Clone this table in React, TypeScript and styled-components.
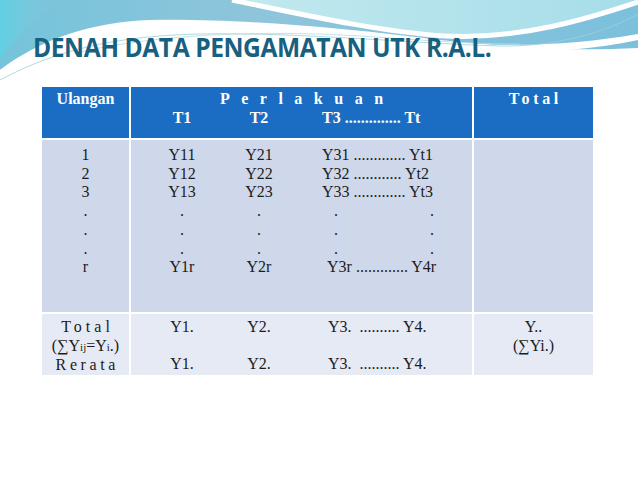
import { Fragment } from "react";
import styled, { createGlobalStyle } from "styled-components";

const GlobalStyle = createGlobalStyle`
  html, body {
    margin: 0;
    padding: 0;
    background: #ffffff;
  }
`;

const Slide = styled.div`
  position: relative;
  width: 638px;
  height: 478px;
  overflow: hidden;
  background: #ffffff;
  font-family: "Liberation Serif", "DejaVu Serif", serif;
`;

// the blue swoosh across the top of the slide
const Decoration = styled.svg`
  position: absolute;
  top: 0;
  left: 0;
  width: 638px;
  height: 90px;
`;

const Content = styled.div`
  position: relative;
  display: flex;
  flex-direction: column;
  padding: 29px 0 0 33px;
`;

const Title = styled.h1`
  margin: 0;
  font-family: "Open Sans", "Liberation Sans", sans-serif;
  font-weight: 700;
  font-size: 27.5px;
  line-height: 36px;
  letter-spacing: -0.5px;
  color: #17607f;
  white-space: nowrap;
  transform: scaleX(0.895);
  transform-origin: left center;
`;

const Table = styled.table`
  margin: 20px 0 0 7px;
  width: 553px;
  border-collapse: collapse;
  table-layout: fixed;
  font-size: 16px;
  color: #1c1c1c;
`;

const Cell = styled.td<{ $bg: string; $pad: number }>`
  background: ${(p) => p.$bg};
  border: 2px solid #ffffff;
  vertical-align: top;
  text-align: center;
  padding: ${(p) => p.$pad}px 0 0;
  line-height: 18.7px;
`;

const HeadCell = styled(Cell)`
  color: #ffffff;
  font-weight: 700;
`;

const Spaced = styled.div<{ $gap: number }>`
  letter-spacing: ${(p) => p.$gap}px;
  padding-left: ${(p) => p.$gap}px;
  white-space: nowrap;
`;

const SubGrid = styled.div`
  display: grid;
  grid-template-columns: 102px 52px 37px 118px 1fr;
`;

const Sub = styled.div<{ $col: number }>`
  grid-column: ${(p) => p.$col};
  text-align: center;
  white-space: nowrap;
`;

const Wide = styled.div<{ $shift?: number }>`
  grid-column: 4 / span 2;
  text-align: left;
  white-space: nowrap;
  padding-left: ${(p) => p.$shift ?? 0}px;
`;

const Range = styled.div`
  grid-column: 4;
  display: flex;
  justify-content: space-between;
  white-space: nowrap;
  padding: 0 6px 0 12px;
`;

const Small = styled.span`
  font-size: 11px;
`;

type BodyRow = { u: string; a: string; b: string; c?: string; shift?: number };

const bodyRows: BodyRow[] = [
  { u: "1", a: "Y11", b: "Y21", c: "Y31 ............. Yt1" },
  { u: "2", a: "Y12", b: "Y22", c: "Y32 ............ Yt2" },
  { u: "3", a: "Y13", b: "Y23", c: "Y33 ............. Yt3" },
  { u: ".", a: ".", b: "." },
  { u: ".", a: ".", b: "." },
  { u: ".", a: ".", b: "." },
  { u: "r", a: "Y1r", b: "Y2r", c: "Y3r ............. Y4r", shift: 5 },
];

const footLine = "Y3.\u00a0\u00a0.......... Y4.";

export default function App() {
  return (
    <>
      <GlobalStyle />
      <Slide>
        <Decoration viewBox="0 0 638 90">
          <defs>
            <linearGradient id="sky" x1="0" y1="0" x2="1" y2="0">
              <stop offset="0" stopColor="#75c4da" />
              <stop offset="0.4" stopColor="#8ec5db" />
              <stop offset="1" stopColor="#7cc0dc" />
            </linearGradient>
            <linearGradient id="light" x1="0" y1="0" x2="1" y2="0">
              <stop offset="0" stopColor="#c2e9ee" />
              <stop offset="1" stopColor="#a6dde9" />
            </linearGradient>
            <linearGradient id="edge" x1="0" y1="0" x2="1" y2="0">
              <stop offset="0" stopColor="#5fd0e2" />
              <stop offset="1" stopColor="#8ec5db" stopOpacity="0" />
            </linearGradient>
          </defs>
          <path d="M0,0 H638 V48 C560,52 500,46 440,40 C330,26 220,18 150,20 C90,22 40,40 0,70 Z" fill="url(#sky)" />
          <path d="M0,0 H60 V0 C30,20 10,45 0,60 Z" fill="url(#edge)" />
          <path d="M0,70 C50,32 110,22 170,22 C260,22 360,34 440,42 C520,48 580,44 638,34 V40 C580,52 520,55 440,50 C340,40 240,30 170,30 C100,30 50,48 0,74 Z" fill="#ffffff" />
          <path d="M232,0 C300,14 380,32 445,36 C520,40 590,18 638,2 V0 Z" fill="url(#light)" />
          <path d="M232,0 C300,14 380,32 445,36 C520,40 590,18 638,2" fill="none" stroke="#ffffff" strokeWidth="5" />
          <path d="M0,80 C60,48 120,36 200,34 C300,32 420,44 500,46 C560,47 610,30 638,14" fill="none" stroke="#9ccfd9" strokeWidth="0.8" />
          <path d="M80,52 C160,34 260,30 360,36 C420,40 470,44 520,44" fill="none" stroke="#b6dbe2" strokeWidth="0.8" />
        </Decoration>
        <Content>
          <Title>DENAH DATA PENGAMATAN UTK R.A.L.</Title>
          <Table>
            <colgroup>
              <col style={{ width: 89 }} />
              <col style={{ width: 343 }} />
              <col style={{ width: 121 }} />
            </colgroup>
            <tbody>
              <tr style={{ height: 53 }}>
                <HeadCell $bg="#1a6dc2" $pad={3}>
                  Ulangan
                </HeadCell>
                <HeadCell $bg="#1a6dc2" $pad={3}>
                  <Spaced $gap={11.5}>Perlakuan</Spaced>
                  <SubGrid>
                    <Sub $col={1}>T1</Sub>
                    <Sub $col={2}>T2</Sub>
                    <Wide>T3 .............. Tt</Wide>
                  </SubGrid>
                </HeadCell>
                <HeadCell $bg="#1a6dc2" $pad={3}>
                  <Spaced $gap={3.6}>Total</Spaced>
                </HeadCell>
              </tr>
              <tr style={{ height: 174 }}>
                <Cell $bg="#cfd8ea" $pad={6}>
                  {bodyRows.map((r, i) => (
                    <div key={i}>{r.u}</div>
                  ))}
                </Cell>
                <Cell $bg="#cfd8ea" $pad={6}>
                  <SubGrid>
                    {bodyRows.map((r, i) => (
                      <Fragment key={i}>
                        <Sub $col={1}>{r.a}</Sub>
                        <Sub $col={2}>{r.b}</Sub>
                        {r.c ? (
                          <Wide $shift={r.shift}>{r.c}</Wide>
                        ) : (
                          <Range>
                            <span>.</span>
                            <span>.</span>
                          </Range>
                        )}
                      </Fragment>
                    ))}
                  </SubGrid>
                </Cell>
                <Cell $bg="#cfd8ea" $pad={6} />
              </tr>
              <tr style={{ height: 63 }}>
                <Cell $bg="#e6eaf4" $pad={4}>
                  <Spaced $gap={4}>Total</Spaced>
                  <div>
                    (∑Y<Small>ij</Small>=Y<Small>i</Small>.)
                  </div>
                  <Spaced $gap={3.6}>Rerata</Spaced>
                </Cell>
                <Cell $bg="#e6eaf4" $pad={4}>
                  <SubGrid>
                    <Sub $col={1}>Y1.</Sub>
                    <Sub $col={2}>Y2.</Sub>
                    <Wide $shift={6}>{footLine}</Wide>
                    <Sub $col={1}>&nbsp;</Sub>
                    <Sub $col={1}>Y1.</Sub>
                    <Sub $col={2}>Y2.</Sub>
                    <Wide $shift={6}>{footLine}</Wide>
                  </SubGrid>
                </Cell>
                <Cell $bg="#e6eaf4" $pad={4}>
                  <div>Y..</div>
                  <div>(∑Yi.)</div>
                </Cell>
              </tr>
            </tbody>
          </Table>
        </Content>
      </Slide>
    </>
  );
}
